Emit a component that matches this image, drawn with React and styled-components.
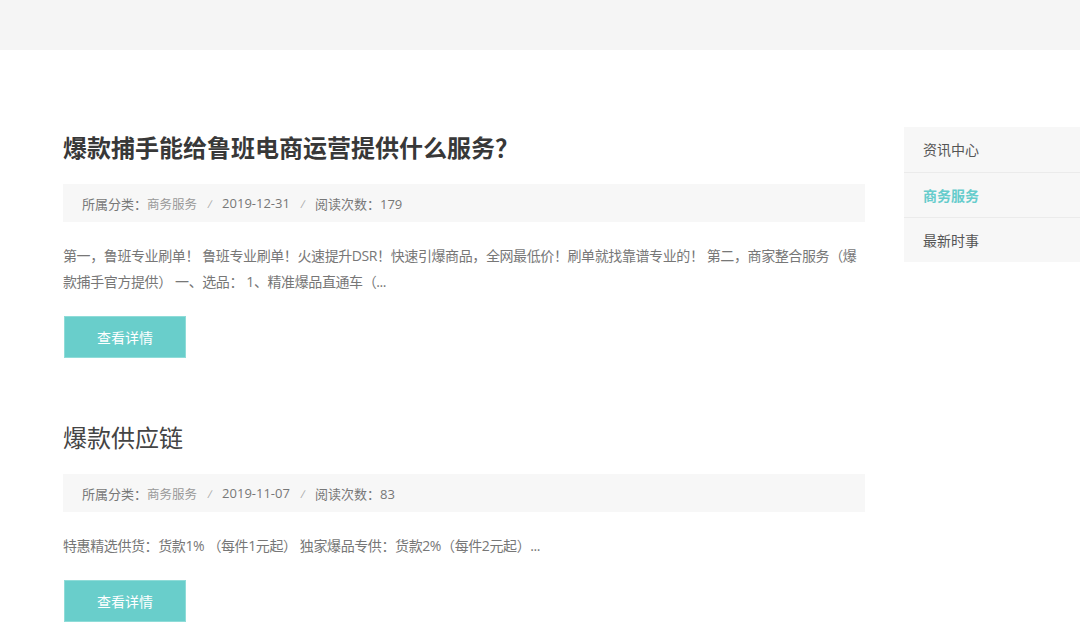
import React from 'react';
import styled, { createGlobalStyle } from 'styled-components';

const GlobalStyle = createGlobalStyle`
  html, body {
    margin: 0;
    padding: 0;
    background: #ffffff;
    font-family: "Open Sans", "Noto Sans CJK SC", sans-serif;
    color: #666;
  }
`;

const TopBand = styled.div`
  height: 50px;
  background: #f5f5f5;
`;

const Page = styled.div`
  display: flex;
  align-items: flex-start;
  padding: 77px 0 0 63px;
  gap: 39px;
`;

const Main = styled.div`
  width: 802px;
  flex-shrink: 0;
`;

const Article = styled.div`
  margin-bottom: 59px;
`;

const Title = styled.h2`
  margin: 0;
  font-size: 24px;
  line-height: 42px;
  color: ${props => (props.active ? '#383838' : '#444')};
  font-weight: ${props => (props.active ? 700 : 400)};
`;

const Meta = styled.div`
  margin-top: 15px;
  height: 38px;
  background: #f7f7f7;
  display: flex;
  align-items: center;
  padding-left: 19px;
  font-size: 13px;
  color: #777;
`;

const Category = styled.span`
  color: #999;
  font-size: 12.5px;
`;

const Sep = styled.span`
  color: #aaa;
  font-size: 11px;
  margin: 0 10px 0 11px;
  display: inline-block;
  transform: skewX(-10deg);
`;

const Desc = styled.p`
  margin: 21px 0 0;
  font-size: 14px;
  line-height: 26px;
  letter-spacing: -0.4px;
  color: #777;
`;

const Button = styled.button`
  margin: 21px 0 0 1px;
  width: 122px;
  height: 42px;
  padding: 0;
  border: 1px solid #8fdcd8;
  background: #69cecb;
  color: #fff;
  font-size: 14px;
  font-family: inherit;
  cursor: pointer;
`;

const Sidebar = styled.ul`
  list-style: none;
  margin: 0;
  padding: 0;
  flex: 1;
  background: #f7f7f7;
`;

const SideItem = styled.li`
  height: 45px;
  line-height: 45px;
  padding-left: 19px;
  font-size: 14px;
  color: ${props => (props.active ? '#66cccc' : '#555')};
  font-weight: ${props => (props.active ? 700 : 400)};
  border-top: ${props => (props.first ? 'none' : '1px solid #ebebeb')};
  box-sizing: border-box;
`;

const articles = [
  {
    title: '爆款捕手能给鲁班电商运营提供什么服务？',
    active: true,
    date: '2019-12-31',
    views: 179,
    desc: '第一，鲁班专业刷单！ 鲁班专业刷单！火速提升DSR！快速引爆商品，全网最低价！刷单就找靠谱专业的！ 第二，商家整合服务（爆款捕手官方提供） 一、选品： 1、精准爆品直通车（...',
  },
  {
    title: '爆款供应链',
    active: false,
    date: '2019-11-07',
    views: 83,
    desc: '特惠精选供货：货款1% （每件1元起） 独家爆品专供：货款2%（每件2元起）...',
  },
];

const side = ['资讯中心', '商务服务', '最新时事'];

export default function App() {
  return (
    <>
      <GlobalStyle />
      <TopBand />
      <Page>
        <Main>
          {articles.map(a => (
            <Article key={a.title}>
              <Title active={a.active}>{a.title}</Title>
              <Meta>
                所属分类：<Category>商务服务</Category>
                <Sep>/</Sep>
                {a.date}
                <Sep>/</Sep>
                阅读次数：{a.views}
              </Meta>
              <Desc>{a.desc}</Desc>
              <Button>查看详情</Button>
            </Article>
          ))}
        </Main>
        <Sidebar>
          {side.map((s, i) => (
            <SideItem key={s} first={i === 0} active={i === 1}>{s}</SideItem>
          ))}
        </Sidebar>
      </Page>
    </>
  );
}
